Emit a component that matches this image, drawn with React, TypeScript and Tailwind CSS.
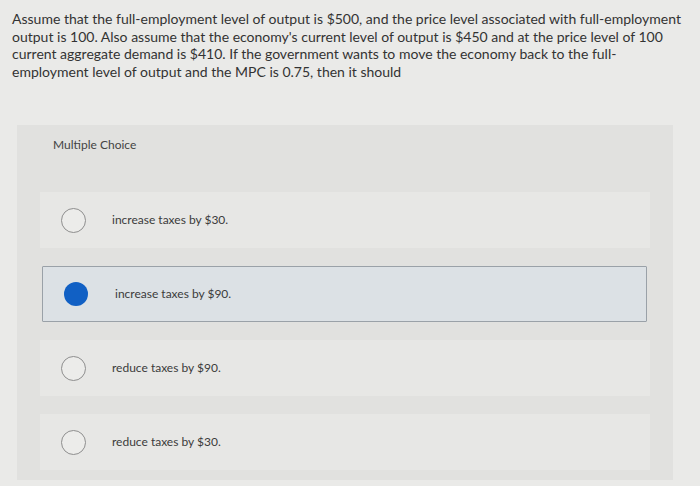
import React from 'react'

const options = [
  { label: 'increase taxes by $30.', selected: false },
  { label: 'increase taxes by $90.', selected: true },
  { label: 'reduce taxes by $90.', selected: false },
  { label: 'reduce taxes by $30.', selected: false },
]

function Radio({ selected }: { selected: boolean }) {
  if (selected) {
    return <div className="h-[24px] w-[24px] rounded-full bg-[#1160c4] shrink-0" />
  }
  return <div className="h-[25px] w-[25px] rounded-full border-[1.5px] border-[#8e8e8e] bg-[#ececea] shrink-0" />
}

export default function App() {
  return (
    <div
      className="w-[700px] h-[486px] overflow-hidden bg-[#eaeae8] text-[#333] pt-[10px]"
      style={{ fontFamily: 'Lato, "Open Sans", sans-serif' }}
    >
      <p className="px-[12px] text-[14px] leading-[17.5px] whitespace-nowrap">
        Assume that the full-employment level of output is $500, and the price level associated with full-employment
        <br />
        output is 100. Also assume that the economy's current level of output is $450 and at the price level of 100
        <br />
        current aggregate demand is $410. If the government wants to move the economy back to the full-
        <br />
        employment level of output and the MPC is 0.75, then it should
      </p>

      <div className="ml-[17px] mt-[45px] w-[656px] bg-[#e1e1df] pt-[11px] pb-[10px]">
        <div className="pl-[36px] text-[12px] text-[#444]">Multiple Choice</div>

        <div className="mt-[38px] flex flex-col gap-[18px]">
          {options.map((o) =>
            o.selected ? (
              <div
                key={o.label}
                className="ml-[25px] mr-[26px] h-[56px] flex items-center border border-[#9aa1a8] bg-[#dce1e5] rounded-[1px]"
              >
                <div className="pl-[21px] pr-[27px]">
                  <Radio selected />
                </div>
                <span className="text-[12px] text-[#3b3b3b]">{o.label}</span>
              </div>
            ) : (
              <div key={o.label} className="ml-[23px] mr-[23px] h-[56px] flex items-center bg-[#e7e7e5]">
                <div className="pl-[21px] pr-[26px]">
                  <Radio selected={false} />
                </div>
                <span className="text-[12px] text-[#3b3b3b]">{o.label}</span>
              </div>
            )
          )}
        </div>
      </div>
    </div>
  )
}
